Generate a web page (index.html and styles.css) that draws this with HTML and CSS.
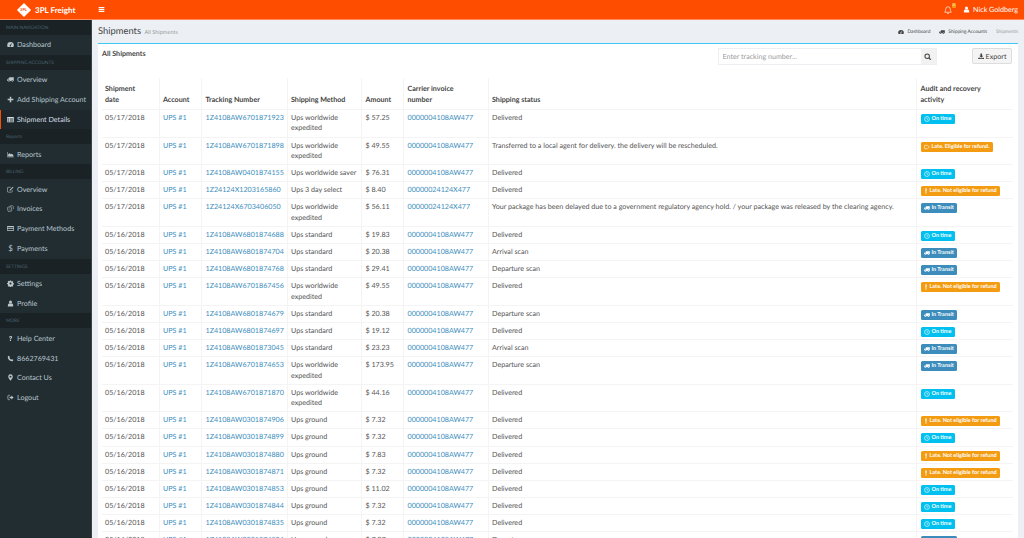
FILE: index.html
```html
<!DOCTYPE html>
<html lang="en">
<head>
<meta charset="utf-8">
<title>Shipments</title>
<link rel="stylesheet" href="styles.css">
</head>
<body>
<svg class="defs" aria-hidden="true">
  <symbol id="i-gauge" viewBox="0 0 16 16"><path d="M8 2.5A7.5 7.5 0 0 0 .5 10c0 1.300.4 2.500 1 3.500h13c.6-1 1-2.200 1-3.500A7.500 7.500 0 0 0 8 2.500zm1 8.800a1.500 1.500 0 1 1-1.800-1.900L10.500 5l.8.4-2.500 4.700c.2.300.3.700.2 1.200z" fill="currentColor"/></symbol>
  <symbol id="i-truck" viewBox="0 0 16 16"><path d="M5 3h10.500v8.500H14a2 2 0 0 0-4 0H6.500a2 2 0 0 0-4 0H.5V8L3 5h2zM1.800 8h2.700V6H3.500z" fill="currentColor"/><circle cx="4.500" cy="12" r="1.400" fill="currentColor"/><circle cx="12" cy="12" r="1.400" fill="currentColor"/></symbol>
  <symbol id="i-plus" viewBox="0 0 16 16"><path d="M6.300 1.500h3.400v4.800h4.800v3.400H9.700v4.800H6.300V9.700H1.500V6.300h4.800z" fill="currentColor"/></symbol>
  <symbol id="i-table" viewBox="0 0 16 16"><path d="M.5 2h15v12H.5zM2 5.500v1.800h3V5.500zm4.500 0v1.800h7.500V5.500zM2 8.500v1.800h3V8.500zm4.500 0v1.800h7.500V8.500zM2 11.300v1.400h3v-1.400zm4.500 0v1.400h7.500v-1.400z" fill="currentColor" fill-rule="evenodd"/></symbol>
  <symbol id="i-area" viewBox="0 0 16 16"><path d="M.5 2.500h1.200v10.800h13.800v1.200H.5z" fill="currentColor"/><path d="M2.700 12.300V7.500l3-2.500 3 2.500 2.300-1.500 3.500 3v3.300z" fill="currentColor"/></symbol>
  <symbol id="i-edit" viewBox="0 0 16 16"><path d="M12 9.500v3a1.500 1.500 0 0 1-1.500 1.500h-8A1.500 1.500 0 0 1 1 12.500v-8A1.500 1.500 0 0 1 2.500 3h6" fill="none" stroke="currentColor" stroke-width="1.400"/><path d="M13.500 1.500l1.500 1.500-7 7-2.300.6.600-2.300z" fill="currentColor"/></symbol>
  <symbol id="i-copy" viewBox="0 0 16 16"><rect x="1.500" y="4.500" width="9" height="10" rx="2" transform="rotate(-12 6 9)" fill="none" stroke="currentColor" stroke-width="1.300"/><path d="M6 2.500l6-.8a2 2 0 0 1 2.200 1.700l.8 5.600" fill="none" stroke="currentColor" stroke-width="1.300"/><path d="M4 8l4 3" stroke="currentColor" stroke-width="1.200"/></symbol>
  <symbol id="i-card" viewBox="0 0 16 16"><path d="M1.500 2.500h13A1.500 1.500 0 0 1 16 4v8a1.500 1.500 0 0 1-1.500 1.500h-13A1.500 1.500 0 0 1 0 12V4a1.500 1.500 0 0 1 1.500-1.500zM1.300 4.500v1.800h13.400V4.500zm0 4v3.700h13.400V8.500z" fill="currentColor" fill-rule="evenodd"/></symbol>
  <symbol id="i-gear" viewBox="0 0 16 16"><path d="M6.700 1h2.600l.4 1.900 1.300.5 1.600-1 1.800 1.800-1 1.600.5 1.300 1.900.4v2.600l-1.900.4-.5 1.300 1 1.600-1.800 1.800-1.600-1-1.300.5-.4 1.900H6.700l-.4-1.900-1.300-.5-1.600 1-1.800-1.800 1-1.600-.5-1.300L.2 9.300V6.700l1.900-.4.5-1.300-1-1.600 1.800-1.800 1.600 1 1.300-.5zM8 5.700a2.300 2.300 0 1 0 0 4.600 2.300 2.300 0 0 0 0-4.600z" fill="currentColor" fill-rule="evenodd"/></symbol>
  <symbol id="i-user" viewBox="0 0 16 16"><circle cx="8" cy="4.500" r="3.500" fill="currentColor"/><path d="M2 15v-3.500C2 9.500 3.500 8 5.500 8h5c2 0 3.500 1.500 3.500 3.500V15z" fill="currentColor"/></symbol>
  <symbol id="i-question" viewBox="0 0 16 16"><path d="M4.500 5.500C4.600 3.300 6 2 8.200 2c2.100 0 3.600 1.200 3.600 3 0 1.400-.8 2.100-1.700 2.800-.8.600-1 .9-1 1.800H6.600c0-1.500.4-2.200 1.400-2.900.6-.5 1.100-.9 1.100-1.500 0-.6-.4-1-1-1-.7 0-1.100.5-1.200 1.300zM6.500 11h2.700v2.700H6.500z" fill="currentColor"/></symbol>
  <symbol id="i-phone" viewBox="0 0 16 16"><path d="M4.500 1.500l2.300 3.300-1.500 1.700c.8 1.700 2.400 3.400 4.200 4.200l1.700-1.500 3.300 2.300c-.4 1.700-1.700 2.800-3.300 2.800C6 14.300 1.700 10 1.700 4.800c0-1.600 1.100-2.900 2.800-3.300z" fill="currentColor"/></symbol>
  <symbol id="i-pin" viewBox="0 0 16 16"><path d="M8 .8a5.200 5.200 0 0 0-5.200 5.200c0 3 3.200 6 5.200 9.200 2-3.200 5.200-6.200 5.200-9.200A5.200 5.200 0 0 0 8 .8zm0 7.400a2.200 2.200 0 1 1 0-4.400 2.200 2.200 0 0 1 0 4.400z" fill="currentColor" fill-rule="evenodd"/></symbol>
  <symbol id="i-logout" viewBox="0 0 16 16"><path d="M6.500 3h-3A1.500 1.500 0 0 0 2 4.500v7A1.500 1.500 0 0 0 3.500 13h3" fill="none" stroke="currentColor" stroke-width="1.600"/><path d="M6 6.300h4V3.500L15 8l-5 4.500V9.700H6z" fill="currentColor"/></symbol>
  <symbol id="i-clock" viewBox="0 0 16 16"><circle cx="8" cy="8" r="6.500" fill="none" stroke="currentColor" stroke-width="1.600"/><path d="M8 4.500V8.500h3" fill="none" stroke="currentColor" stroke-width="1.400"/></symbol>
  <symbol id="i-tag" viewBox="0 0 16 16"><path d="M1.500 3.500h8l5 4.500-5 4.500h-8z" fill="none" stroke="currentColor" stroke-width="1.500"/></symbol>
  <symbol id="i-bang" viewBox="4 0 8 16"><path d="M6 1h4L9.300 10H6.700zM6.600 11.500h2.800v3H6.600z" fill="currentColor"/></symbol>
  <symbol id="i-bell" viewBox="0 0 16 16"><path d="M8 1.500a4.500 4.500 0 0 0-4.500 4.500c0 4-2 5.500-2 6.500h13c0-1-2-2.500-2-6.500A4.500 4.500 0 0 0 8 1.500zM6.300 14a1.800 1.800 0 0 0 3.400 0" fill="none" stroke="currentColor" stroke-width="1.300"/></symbol>
  <symbol id="i-bars" viewBox="0 0 16 16"><path d="M1.500 2.500h13v2.700h-13zM1.500 6.700h13v2.700h-13zM1.500 10.900h13v2.700h-13z" fill="currentColor"/></symbol>
  <symbol id="i-search" viewBox="0 0 16 16"><circle cx="6.800" cy="6.800" r="4.800" fill="none" stroke="currentColor" stroke-width="2.200"/><path d="M10.300 10.300l4.200 4.200" stroke="currentColor" stroke-width="2.600"/></symbol>
  <symbol id="i-download" viewBox="0 0 16 16"><path d="M6 1h4v5.500h3L8 11.500 3 6.500h3zM.5 11.500h4l1.500 1.500h4l1.500-1.500h4V15H.5z" fill="currentColor"/></symbol>
</svg>

<header class="topbar">
  <div class="brand">
    <span class="logo"><span class="logo-text">3PL</span></span>
    <span class="brand-name">3PL Freight</span>
  </div>
  <button class="toggle" type="button" aria-label="Toggle navigation"><svg class="ico ico-toggle"><use href="#i-bars"/></svg></button>
  <div class="top-right">
    <span class="bell"><svg class="ico ico-bell"><use href="#i-bell"/></svg><span class="bell-dot">8</span></span>
    <span class="me"><svg class="ico ico-me"><use href="#i-user"/></svg>Nick Goldberg</span>
  </div>
</header>

<div class="shell">
  <nav class="sidebar">
    <div class="nav-head">MAIN NAVIGATION</div>
    <a class="nav-item"><svg class="ico"><use href="#i-gauge"/></svg>Dashboard</a>
    <div class="nav-head">SHIPPING ACCOUNTS</div>
    <a class="nav-item"><svg class="ico"><use href="#i-truck"/></svg>Overview</a>
    <a class="nav-item"><svg class="ico"><use href="#i-plus"/></svg>Add Shipping Account</a>
    <a class="nav-item is-active"><svg class="ico"><use href="#i-table"/></svg>Shipment Details</a>
    <div class="nav-head">Reports</div>
    <a class="nav-item"><svg class="ico"><use href="#i-area"/></svg>Reports</a>
    <div class="nav-head">BILLING</div>
    <a class="nav-item"><svg class="ico"><use href="#i-edit"/></svg>Overview</a>
    <a class="nav-item"><svg class="ico"><use href="#i-copy"/></svg>Invoices</a>
    <a class="nav-item"><svg class="ico"><use href="#i-card"/></svg>Payment Methods</a>
    <a class="nav-item"><span class="ico ico-glyph">$</span>Payments</a>
    <div class="nav-head">SETTINGS</div>
    <a class="nav-item"><svg class="ico"><use href="#i-gear"/></svg>Settings</a>
    <a class="nav-item"><svg class="ico"><use href="#i-user"/></svg>Profile</a>
    <div class="nav-head">MORE</div>
    <a class="nav-item"><svg class="ico"><use href="#i-question"/></svg>Help Center</a>
    <a class="nav-item"><svg class="ico"><use href="#i-phone"/></svg>8662769431</a>
    <a class="nav-item"><svg class="ico"><use href="#i-pin"/></svg>Contact Us</a>
    <a class="nav-item"><svg class="ico"><use href="#i-logout"/></svg>Logout</a>
  </nav>

  <main class="content">
    <div class="page-head">
      <h1 class="page-title">Shipments <small class="page-sub">All Shipments</small></h1>
      <ol class="crumbs">
        <li><svg class="ico"><use href="#i-gauge"/></svg>Dashboard</li>
        <li><svg class="ico"><use href="#i-truck"/></svg>Shipping Accounts</li>
        <li class="crumb-now">Shipments</li>
      </ol>
    </div>
    <section class="box">
      <div class="box-head">
        <h2 class="box-title">All Shipments</h2>
        <div class="search">
          <input class="search-input" type="text" placeholder="Enter tracking number...">
          <button class="search-btn" type="button" aria-label="Search"><svg class="ico"><use href="#i-search"/></svg></button>
        </div>
        <button class="export" type="button"><svg class="ico"><use href="#i-download"/></svg>Export</button>
      </div>
      <table class="grid">
        <colgroup>
          <col class="c-date"><col class="c-acct"><col class="c-track"><col class="c-method"><col class="c-amt"><col class="c-inv"><col class="c-status"><col class="c-audit">
        </colgroup>
        <thead>
          <tr><th>Shipment<br>date</th><th>Account</th><th>Tracking Number</th><th>Shipping Method</th><th>Amount</th><th>Carrier invoice<br>number</th><th>Shipping status</th><th>Audit and recovery<br>activity</th></tr>
        </thead>
        <tbody>
          <tr><td>05/17/2018</td><td><a>UPS #1</a></td><td><a>1Z4108AW6701871923</a></td><td>Ups worldwide expedited</td><td>$ 57.25</td><td><a>0000004108AW477</a></td><td>Delivered</td><td><span class="tag tag-ok"><svg class="ico"><use href="#i-clock"/></svg>On time</span></td></tr>
          <tr><td>05/17/2018</td><td><a>UPS #1</a></td><td><a>1Z4108AW6701871898</a></td><td>Ups worldwide expedited</td><td>$ 49.55</td><td><a>0000004108AW477</a></td><td>Transferred to a local agent for delivery. the delivery will be rescheduled.</td><td><span class="tag tag-late"><svg class="ico"><use href="#i-tag"/></svg>Late. Eligible for refund.</span></td></tr>
          <tr><td>05/17/2018</td><td><a>UPS #1</a></td><td><a>1Z4108AW0401874155</a></td><td>Ups worldwide saver</td><td>$ 76.31</td><td><a>0000004108AW477</a></td><td>Delivered</td><td><span class="tag tag-ok"><svg class="ico"><use href="#i-clock"/></svg>On time</span></td></tr>
          <tr><td>05/17/2018</td><td><a>UPS #1</a></td><td><a>1Z24124X1203165860</a></td><td>Ups 3 day select</td><td>$ 8.40</td><td><a>00000024124X477</a></td><td>Delivered</td><td><span class="tag tag-late"><svg class="ico ico-bang"><use href="#i-bang"/></svg>Late. Not eligible for refund</span></td></tr>
          <tr><td>05/17/2018</td><td><a>UPS #1</a></td><td><a>1Z24124X6703406050</a></td><td>Ups worldwide expedited</td><td>$ 56.11</td><td><a>00000024124X477</a></td><td>Your package has been delayed due to a government regulatory agency hold. / your package was released by the clearing agency.</td><td><span class="tag tag-transit"><svg class="ico"><use href="#i-truck"/></svg>In Transit</span></td></tr>
          <tr><td>05/16/2018</td><td><a>UPS #1</a></td><td><a>1Z4108AW6801874688</a></td><td>Ups standard</td><td>$ 19.83</td><td><a>0000004108AW477</a></td><td>Delivered</td><td><span class="tag tag-ok"><svg class="ico"><use href="#i-clock"/></svg>On time</span></td></tr>
          <tr><td>05/16/2018</td><td><a>UPS #1</a></td><td><a>1Z4108AW6801874704</a></td><td>Ups standard</td><td>$ 20.38</td><td><a>0000004108AW477</a></td><td>Arrival scan</td><td><span class="tag tag-transit"><svg class="ico"><use href="#i-truck"/></svg>In Transit</span></td></tr>
          <tr><td>05/16/2018</td><td><a>UPS #1</a></td><td><a>1Z4108AW6801874768</a></td><td>Ups standard</td><td>$ 29.41</td><td><a>0000004108AW477</a></td><td>Departure scan</td><td><span class="tag tag-transit"><svg class="ico"><use href="#i-truck"/></svg>In Transit</span></td></tr>
          <tr><td>05/16/2018</td><td><a>UPS #1</a></td><td><a>1Z4108AW6701867456</a></td><td>Ups worldwide expedited</td><td>$ 49.55</td><td><a>0000004108AW477</a></td><td>Delivered</td><td><span class="tag tag-late"><svg class="ico ico-bang"><use href="#i-bang"/></svg>Late. Not eligible for refund</span></td></tr>
          <tr><td>05/16/2018</td><td><a>UPS #1</a></td><td><a>1Z4108AW6801874679</a></td><td>Ups standard</td><td>$ 20.38</td><td><a>0000004108AW477</a></td><td>Departure scan</td><td><span class="tag tag-transit"><svg class="ico"><use href="#i-truck"/></svg>In Transit</span></td></tr>
          <tr><td>05/16/2018</td><td><a>UPS #1</a></td><td><a>1Z4108AW6801874697</a></td><td>Ups standard</td><td>$ 19.12</td><td><a>0000004108AW477</a></td><td>Delivered</td><td><span class="tag tag-ok"><svg class="ico"><use href="#i-clock"/></svg>On time</span></td></tr>
          <tr><td>05/16/2018</td><td><a>UPS #1</a></td><td><a>1Z4108AW6801873045</a></td><td>Ups standard</td><td>$ 23.23</td><td><a>0000004108AW477</a></td><td>Arrival scan</td><td><span class="tag tag-transit"><svg class="ico"><use href="#i-truck"/></svg>In Transit</span></td></tr>
          <tr><td>05/16/2018</td><td><a>UPS #1</a></td><td><a>1Z4108AW6701874653</a></td><td>Ups worldwide expedited</td><td>$ 173.95</td><td><a>0000004108AW477</a></td><td>Departure scan</td><td><span class="tag tag-transit"><svg class="ico"><use href="#i-truck"/></svg>In Transit</span></td></tr>
          <tr><td>05/16/2018</td><td><a>UPS #1</a></td><td><a>1Z4108AW6701871870</a></td><td>Ups worldwide expedited</td><td>$ 44.16</td><td><a>0000004108AW477</a></td><td>Delivered</td><td><span class="tag tag-ok"><svg class="ico"><use href="#i-clock"/></svg>On time</span></td></tr>
          <tr><td>05/16/2018</td><td><a>UPS #1</a></td><td><a>1Z4108AW0301874906</a></td><td>Ups ground</td><td>$ 7.32</td><td><a>0000004108AW477</a></td><td>Delivered</td><td><span class="tag tag-late"><svg class="ico ico-bang"><use href="#i-bang"/></svg>Late. Not eligible for refund</span></td></tr>
          <tr><td>05/16/2018</td><td><a>UPS #1</a></td><td><a>1Z4108AW0301874899</a></td><td>Ups ground</td><td>$ 7.32</td><td><a>0000004108AW477</a></td><td>Delivered</td><td><span class="tag tag-ok"><svg class="ico"><use href="#i-clock"/></svg>On time</span></td></tr>
          <tr><td>05/16/2018</td><td><a>UPS #1</a></td><td><a>1Z4108AW0301874880</a></td><td>Ups ground</td><td>$ 7.83</td><td><a>0000004108AW477</a></td><td>Delivered</td><td><span class="tag tag-late"><svg class="ico ico-bang"><use href="#i-bang"/></svg>Late. Not eligible for refund</span></td></tr>
          <tr><td>05/16/2018</td><td><a>UPS #1</a></td><td><a>1Z4108AW0301874871</a></td><td>Ups ground</td><td>$ 7.32</td><td><a>0000004108AW477</a></td><td>Delivered</td><td><span class="tag tag-late"><svg class="ico ico-bang"><use href="#i-bang"/></svg>Late. Not eligible for refund</span></td></tr>
          <tr><td>05/16/2018</td><td><a>UPS #1</a></td><td><a>1Z4108AW0301874853</a></td><td>Ups ground</td><td>$ 11.02</td><td><a>0000004108AW477</a></td><td>Delivered</td><td><span class="tag tag-ok"><svg class="ico"><use href="#i-clock"/></svg>On time</span></td></tr>
          <tr><td>05/16/2018</td><td><a>UPS #1</a></td><td><a>1Z4108AW0301874844</a></td><td>Ups ground</td><td>$ 7.32</td><td><a>0000004108AW477</a></td><td>Delivered</td><td><span class="tag tag-ok"><svg class="ico"><use href="#i-clock"/></svg>On time</span></td></tr>
          <tr><td>05/16/2018</td><td><a>UPS #1</a></td><td><a>1Z4108AW0301874835</a></td><td>Ups ground</td><td>$ 7.32</td><td><a>0000004108AW477</a></td><td>Delivered</td><td><span class="tag tag-ok"><svg class="ico"><use href="#i-clock"/></svg>On time</span></td></tr>
          <tr><td>05/16/2018</td><td><a>UPS #1</a></td><td><a>1Z4108AW0301874826</a></td><td>Ups ground</td><td>$ 7.07</td><td><a>0000004108AW477</a></td><td>Departure scan</td><td><span class="tag tag-transit"><svg class="ico"><use href="#i-truck"/></svg>In Transit</span></td></tr>
        </tbody>
      </table>
    </section>
  </main>
</div>
</body>
</html>
```

FILE: styles.css
```css
* { box-sizing: border-box; }
html, body { height: 100%; }
body {
  margin: 0;
  overflow: hidden;
  font-family: Lato, "Open Sans", sans-serif;
  font-size: 7.150px;
  color: #555;
  background: #ecf0f5;
  display: flex;
  flex-direction: column;
  text-rendering: geometricPrecision;
}
.defs { display: none; }
.ico { width: 1em; height: 1em; flex: none; display: inline-block; }

.topbar {
  flex: none;
  height: 20px;
  background: #ff4d00;
  color: #fff;
  display: flex;
  align-items: center;
  border-bottom: 1px solid #ff8a5c;
}
.brand { width: 92px; flex: none; display: flex; align-items: center; padding-left: 17px; gap: 5px; }
.logo { width: 13px; height: 13px; display: flex; align-items: center; justify-content: center; position: relative; }
.logo::before { content: ""; position: absolute; width: 10px; height: 10px; background: #fff; transform: rotate(45deg); }
.logo-text { position: relative; font-size: 4px; font-weight: 700; color: #ff4d00; }
.brand-name { font-size: 8px; font-weight: 700; white-space: nowrap; }
.toggle { border: 0; background: none; color: #fff; padding: 0; margin-left: 5.500px; display: flex; font-size: 7px; }
.top-right { margin-left: auto; display: flex; align-items: center; padding-right: 6px; }
.bell { position: relative; display: flex; font-size: 8px; margin-right: 11px; }
.bell-dot { position: absolute; top: -3px; right: -4px; width: 4.500px; height: 5px; border-radius: 1px; background: #f39c12; font-size: 3.500px; line-height: 5px; text-align: center; color: #fff; }
.me { display: flex; align-items: center; gap: 3px; font-size: 7.150px; white-space: nowrap; }
.ico-me { font-size: 7px; }

.shell { flex: 1; min-height: 0; display: flex; }
.sidebar { width: 92px; flex: none; background: #222d32; color: #b8c7ce; border-right: 1px solid #3a4347; }
.nav-head { height: 15px; line-height: 15px; background: #1a2226; color: #4b646f; font-size: 4.700px; padding-left: 6px; white-space: nowrap; }
.nav-item { height: 19.850px; display: flex; align-items: center; padding-left: 6px; font-size: 7.150px; white-space: nowrap; color: #b8c7ce; border-left: 1px solid transparent; }
.nav-item .ico { width: 7px; height: 7px; margin-right: 3px; }
.ico-glyph { font-size: 8px; text-align: center; line-height: 7px; }
.is-active { border-left-color: #ff4d00; color: #d5dfe4; background: #1e282c; }

.content { flex: 1; min-width: 0; padding: 0 6px; display: flex; flex-direction: column; }
.page-head { flex: none; height: 23px; display: flex; align-items: center; justify-content: space-between; }
.page-title { margin: 0; font-size: 9.400px; font-weight: 400; color: #444; white-space: nowrap; }
.page-sub { font-size: 5.600px; color: #9a9a9a; margin-left: 1px; }
.crumbs { list-style: none; margin: 0; padding: 0; display: flex; gap: 9px; font-size: 4.800px; color: #444; }
.crumbs li { display: flex; align-items: center; gap: 3px; white-space: nowrap; }
.crumbs .ico { font-size: 6px; }
.crumb-now { color: #999; }

.box { flex: 1; min-height: 0; background: #fff; border-top: 1.500px solid #3cc8f0; padding: 0 6px 0 3.500px; }
.box-head { height: 33.500px; display: flex; align-items: flex-start; padding-top: 4px; }
.box-title { margin: 0; padding-left: .5px; font-size: 7.150px; font-weight: 700; color: #444; line-height: 11px; flex: 1; }
.search { width: 219px; height: 17px; display: flex; border: 1px solid #eceef2; margin-right: 35.500px; }
.search-input { flex: 1; min-width: 0; border: 0; outline: 0; padding: 0 4px; font: 7.150px Lato, sans-serif; color: #444; text-rendering: geometricPrecision; }
.search-input::placeholder { color: #9a9a9a; opacity: 1; }
.search-btn { width: 15px; border: 0; padding: 0; background: #f2f2f2; color: #444; display: flex; align-items: center; justify-content: center; font-size: 7.500px; }
.export { width: 40px; height: 16px; border: 1px solid #ddd; border-radius: 2px; background: #f4f4f4; color: #444; padding: 0; display: flex; align-items: center; justify-content: center; gap: 1.500px; font: 7.150px Lato, sans-serif; text-rendering: geometricPrecision; }
.export .ico { font-size: 6.500px; }

.grid { width: 911.500px; table-layout: fixed; border-collapse: collapse; line-height: 10.300px; }
.c-date { width: 57.500px; }
.c-acct { width: 42.500px; }
.c-track { width: 85.500px; }
.c-method { width: 74.500px; }
.c-amt { width: 42px; }
.c-inv { width: 84.500px; }
.c-status { width: 428.500px; }
.c-audit { width: 96.500px; }
.grid th, .grid td { padding: 2.950px 3.500px; text-align: left; vertical-align: top; border-top: 1px solid #f4f4f4; border-left: 1px solid #f4f4f4; }
.grid th:first-child, .grid td:first-child { border-left: 0; }
.grid th { vertical-align: bottom; line-height: 10.800px; font-weight: 700; color: #444; border-top: 0; padding-top: 6.500px; padding-bottom: 3.500px; }
.grid a { color: #3c8dbc; }

.tag { display: inline-flex; align-items: center; gap: 2px; height: 10px; margin: 1px 0 -1px; padding: 0 3.500px 0 3px; border-radius: 1.500px; color: #fff; font-size: 5.500px; font-weight: 700; line-height: 10px; white-space: nowrap; vertical-align: top; }
.tag .ico { width: 6px; height: 6px; }
.tag .ico-bang { width: 4px; }
.tag-ok { background: #00c0ef; }
.tag-late { background: #f39c12; }
.tag-transit { background: #3c8dbc; }
```
